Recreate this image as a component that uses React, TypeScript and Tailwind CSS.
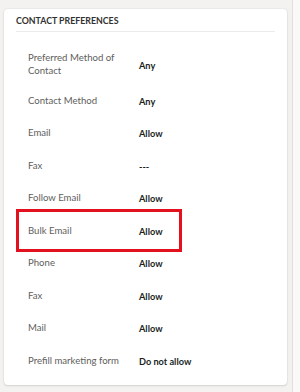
import React from 'react';

const rows: { label: string; value: string; highlight?: boolean; tall?: boolean }[] = [
  { label: 'Preferred Method of Contact', value: 'Any', tall: true },
  { label: 'Contact Method', value: 'Any' },
  { label: 'Email', value: 'Allow' },
  { label: 'Fax', value: '---' },
  { label: 'Follow Email', value: 'Allow' },
  { label: 'Bulk Email', value: 'Allow', highlight: true },
  { label: 'Phone', value: 'Allow' },
  { label: 'Fax', value: 'Allow' },
  { label: 'Mail', value: 'Allow' },
  { label: 'Prefill marketing form', value: 'Do not allow' },
];

function Row({ label, value, highlight, tall }: (typeof rows)[number]) {
  return (
    <div className={`relative flex items-center ${tall ? 'h-[40px]' : 'h-[32.5px]'}`}>
      {highlight && (
        <div className="absolute left-[-12px] top-[-5px] bottom-[-5px] w-[166px] border-[3px] border-[#e3101e]" />
      )}
      <div className="w-[111px] pr-[20px] text-[9.6px] leading-[13px] text-[#605e5c]">{label}</div>
      <div className="pt-[3px] text-[9.2px] font-bold text-[#201f1e]">{value}</div>
    </div>
  );
}

export default function App() {
  return (
    <div
      className="flex h-[392px] w-[300px] bg-[#faf9f8]"
      style={{ fontFamily: 'Lato, "Open Sans", sans-serif' }}
    >
      <div className="h-full w-[293px] border-r border-[#e1dfdd] bg-[#f3f2f1] pl-[4px] pr-[5px] pt-[9px]">
        <div className="h-[376px] rounded-[4px] bg-white px-[11px] shadow-[0_0_2px_rgba(0,0,0,0.12),0_1px_2px_rgba(0,0,0,0.1)]">
          <div className="mx-[1px] flex h-[23px] items-center border-b border-[#edebe9] pt-[1px] text-[8.8px] font-bold text-[#323130]">
            CONTACT PREFERENCES
          </div>
          <div className="pl-[13px] pt-[12px]">
            {rows.map((r, i) => (
              <Row key={i} {...r} />
            ))}
          </div>
        </div>
      </div>
    </div>
  );
}
